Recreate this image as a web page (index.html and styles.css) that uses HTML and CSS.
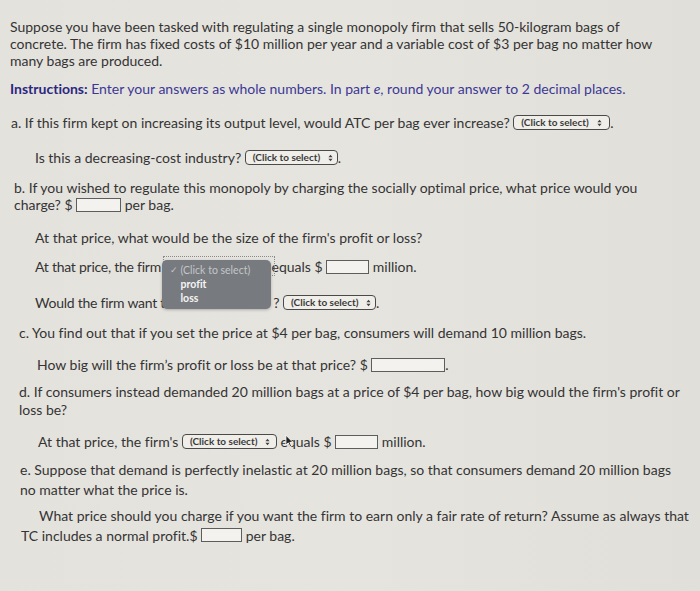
FILE: index.html
```html
<!DOCTYPE html>
<html>
<head>
<meta charset="utf-8">
<link rel="stylesheet" href="styles.css">
</head>
<body>
<div class="page">
  <p class="blk p-intro">Suppose you have been tasked with regulating a single monopoly firm that sells 50-kilogram bags of<br>concrete. The firm has fixed costs of $10 million per year and a variable cost of $3 per bag no matter how<br>many bags are produced.</p>

  <p class="blk p-instr"><b>Instructions:</b> Enter your answers as whole numbers. In part <i>e</i>, round your answer to 2 decimal places.</p>

  <p class="blk p-a">a. If this firm kept on increasing its output level, would ATC per bag ever increase? <span class="sel sel-a">(Click to select)<svg class="arr" viewBox="0 0 6 9"><path d="M3 0.5 L5.5 3.5 L0.5 3.5 Z M3 8.5 L5.5 5.5 L0.5 5.5 Z"/></svg></span>.</p>

  <p class="blk p-is">Is this a decreasing-cost industry? <span class="sel sel-is">(Click to select)<svg class="arr" viewBox="0 0 6 9"><path d="M3 0.5 L5.5 3.5 L0.5 3.5 Z M3 8.5 L5.5 5.5 L0.5 5.5 Z"/></svg></span>.</p>

  <p class="blk p-b">b. If you wished to regulate this monopoly by charging the socially optimal price, what price would you<br>charge? $ <span class="inp inp-b"></span> per bag.</p>

  <p class="blk p-at1">At that price, what would be the size of the firm's profit or loss?</p>

  <p class="blk p-at2"><span class="tight">At that price, the firm</span> <span class="menu-anchor"><span class="focus"></span><span class="menu"><span class="mi mi-sel"><span class="chk">✓</span>(Click to select)</span><span class="mi">profit</span><span class="mi">loss</span></span></span>equals $ <span class="inp inp-at2"></span> million.</p>

  <p class="blk p-would"><span class="tight">Would the firm want t</span><span class="hidden-gap"></span>? <span class="sel sel-would">(Click to select)<svg class="arr" viewBox="0 0 6 9"><path d="M3 0.5 L5.5 3.5 L0.5 3.5 Z M3 8.5 L5.5 5.5 L0.5 5.5 Z"/></svg></span>.</p>

  <p class="blk p-c">c. You find out that if you set the price at $4 per bag, consumers will demand 10 million bags.</p>

  <p class="blk p-how">How big will the firm’s profit or loss be at that price? $ <span class="inp inp-how"></span>.</p>

  <p class="blk p-d">d. If consumers instead demanded 20 million bags at a price of $4 per bag, how big would the firm's profit or<br>loss be?</p>

  <p class="blk p-at3">At that price, the firm's <span class="sel sel-at3">(Click to select)<svg class="arr" viewBox="0 0 6 9"><path d="M3 0.5 L5.5 3.5 L0.5 3.5 Z M3 8.5 L5.5 5.5 L0.5 5.5 Z"/></svg></span> <span class="cursor-wrap"><svg class="cursor" viewBox="0 0 10 15"><path d="M1 1 L1 12 L3.6 9.6 L5.6 14 L7.3 13.2 L5.4 9 L8.8 9 Z"/></svg>equals</span> $ <span class="inp inp-at3"></span> million.</p>

  <p class="blk p-e">e. Suppose that demand is perfectly inelastic at 20 million bags, so that consumers demand 20 million bags<br>no matter what the price is.</p>

  <p class="blk p-what"><span class="ind">What price should you charge if you want the firm to earn only a fair rate of return? Assume as always that</span><br>TC includes a normal profit.$ <span class="inp inp-tc"></span> per bag.</p>
</div>
</body>
</html>
```

FILE: styles.css
```css
html, body {
  margin: 0;
  padding: 0;
}
body {
  width: 700px;
  height: 591px;
  overflow: hidden;
  background: linear-gradient(90deg, #e4e2dd 0%, #e6e4df 50%, #e1dfd9 100%);
  font-family: "Lato", "Liberation Sans", sans-serif;
  font-size: 14px;
  color: #343434;
  font-variant-ligatures: none;
}
.page {
  padding-top: 18px;
}
.blk {
  margin: 0;
  line-height: 17px;
  white-space: nowrap;
}
.p-intro { margin-left: 10px; }
.p-instr { margin-left: 10px; margin-top: 11px; color: #3b3896; }
.p-instr b { color: #2b2880; font-weight: 700; }
.p-a { margin-left: 11px; margin-top: 17px; }
.p-is { margin-left: 35px; margin-top: 18px; }
.p-b { margin-left: 14px; margin-top: 13px; }
.p-at1 { margin-left: 35px; margin-top: 16px; }
.p-at2 { margin-left: 35px; margin-top: 12px; }
.p-would { margin-left: 35px; margin-top: 19px; }
.p-c { margin-left: 19px; margin-top: 13px; }
.p-how { margin-left: 37px; margin-top: 15px; }
.p-d { margin-left: 19px; margin-top: 10px; line-height: 18px; }
.p-at3 { margin-left: 38px; margin-top: 14px; }
.p-e { margin-left: 20px; margin-top: 10px; line-height: 20px; }
.p-what { margin-left: 21px; margin-top: 6px; line-height: 20px; }
.p-what .ind { margin-left: 18px; }
.tight { letter-spacing: -0.25px; }

.sel {
  display: inline-block;
  box-sizing: border-box;
  height: 15px;
  margin-top: 1px;
  line-height: 13px;
  padding: 0 6px 0 7px;
  border: 1px solid #4a4a4a;
  border-radius: 4px;
  background: #efeee9;
  font-size: 10px;
  font-weight: 700;
  color: #3a3a3a;
  vertical-align: top;
  overflow: hidden;
  white-space: nowrap;
}
.sel .arr {
  width: 5px;
  height: 8px;
  margin-left: 8px;
  vertical-align: -1px;
  fill: #444;
}
.sel-a { width: 97px; }
.sel-is { width: 93px; }
.sel-would { width: 93px; }
.sel-at3 { width: 95px; }

.inp {
  display: inline-block;
  box-sizing: border-box;
  height: 14px;
  margin-top: 2px;
  border: 1px solid #5d5d5d;
  background: #f3f2ef;
  vertical-align: top;
}
.inp-b { width: 45px; }
.inp-at2 { width: 43px; }
.inp-how { width: 74px; }
.inp-at3 { width: 43px; }
.inp-tc { width: 41px; }

.menu-anchor {
  display: inline-block;
  position: relative;
  width: 107px;
  height: 14px;
  margin-top: 1px;
  vertical-align: top;
}
.focus {
  position: absolute;
  left: -2px;
  top: -3px;
  width: 110px;
  height: 18px;
  border: 1px dotted #8a8a8a;
}
.menu {
  position: absolute;
  left: -3px;
  top: 1px;
  width: 109px;
  height: 49px;
  box-sizing: border-box;
  padding: 3px 0 0 0;
  background: #777a7e;
  border-radius: 5px;
  box-shadow: 0 1px 3px rgba(0,0,0,0.25);
  display: flex;
  flex-direction: column;
}
.mi {
  display: block;
  padding-left: 19px;
  font-size: 10.5px;
  line-height: 14px;
  font-weight: 700;
  color: #f4f4f4;
  position: relative;
}
.mi-sel {
  color: #c3c6ca;
  font-weight: 400;
}
.chk {
  position: absolute;
  left: 8px;
  top: 0;
  font-size: 9px;
}
.hidden-gap {
  display: inline-block;
  width: 108px;
}
.cursor-wrap {
  position: relative;
}
.cursor {
  position: absolute;
  left: 4px;
  top: 1px;
  width: 9px;
  height: 14px;
  fill: #222;
  stroke: #fff;
  stroke-width: 1;
}
```
